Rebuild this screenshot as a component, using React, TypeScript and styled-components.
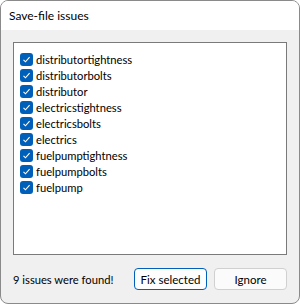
import React from "react";
import styled, { createGlobalStyle } from "styled-components";

const Global = createGlobalStyle`
  html, body { margin: 0; padding: 0; background: #ffffff; }
  body { font-family: "Lato", "Noto Sans", sans-serif; }
`;

const Window = styled.div`
  box-sizing: border-box;
  width: 300px;
  height: 304px;
  border: 1px solid #8a8a8a;
  border-radius: 8px;
  overflow: hidden;
  display: flex;
  flex-direction: column;
  background: #f0f0f0;
`;

const TitleBar = styled.div`
  height: 29px;
  background: #ffffff;
  display: flex;
  align-items: center;
  padding-left: 8px;
  font-size: 12px;
  color: #000;
`;

const Body = styled.div`
  flex: 1;
  display: flex;
  flex-direction: column;
  padding: 12px 12px 0 12px;
`;

const List = styled.div`
  box-sizing: border-box;
  height: 213px;
  background: #ffffff;
  border: 1px solid #7a7a7a;
  padding: 8px 0 0 6px;
  display: flex;
  flex-direction: column;
`;

const Row = styled.label`
  height: 16px;
  display: flex;
  align-items: center;
  gap: 3px;
  font-size: 11.2px;
  color: #000;
  white-space: nowrap;
`;

const Box = styled.span`
  width: 13px;
  height: 13px;
  border-radius: 3px;
  background: #005fb8;
  display: inline-flex;
  align-items: center;
  justify-content: center;
  flex: none;
`;

const Footer = styled.div`
  display: flex;
  align-items: center;
  margin-top: 13px;
  font-size: 11.2px;
`;

const Status = styled.span`
  flex: 1;
  color: #000;
  white-space: nowrap;
`;

const Button = styled.button<{ $primary?: boolean }>`
  box-sizing: border-box;
  width: 73px;
  height: 22px;
  margin-left: 7px;
  border-radius: 4px;
  border: 1px solid ${(p) => (p.$primary ? "#005fb8" : "#d0d0d0")};
  background: ${(p) => (p.$primary ? "#fdfdfd" : "#fbfbfb")};
  font-family: inherit;
  font-size: 11.5px;
  color: #000;
  padding: 0;
  white-space: nowrap;
`;

const items = [
  "distributortightness",
  "distributorbolts",
  "distributor",
  "electricstightness",
  "electricsbolts",
  "electrics",
  "fuelpumptightness",
  "fuelpumpbolts",
  "fuelpump",
];

const Check = () => (
  <Box>
    <svg width="9" height="9" viewBox="0 0 9 9">
      <path d="M1.5 4.8 L3.5 6.8 L7.6 2.2" fill="none" stroke="#fff" strokeWidth="1.1" />
    </svg>
  </Box>
);

export default function App() {
  return (
    <>
      <Global />
      <Window>
        <TitleBar>Save-file issues</TitleBar>
        <Body>
          <List>
            {items.map((it) => (
              <Row key={it}>
                <Check />
                {it}
              </Row>
            ))}
          </List>
          <Footer>
            <Status>9 issues were found!</Status>
            <Button $primary>Fix selected</Button>
            <Button>Ignore</Button>
          </Footer>
        </Body>
      </Window>
    </>
  );
}
